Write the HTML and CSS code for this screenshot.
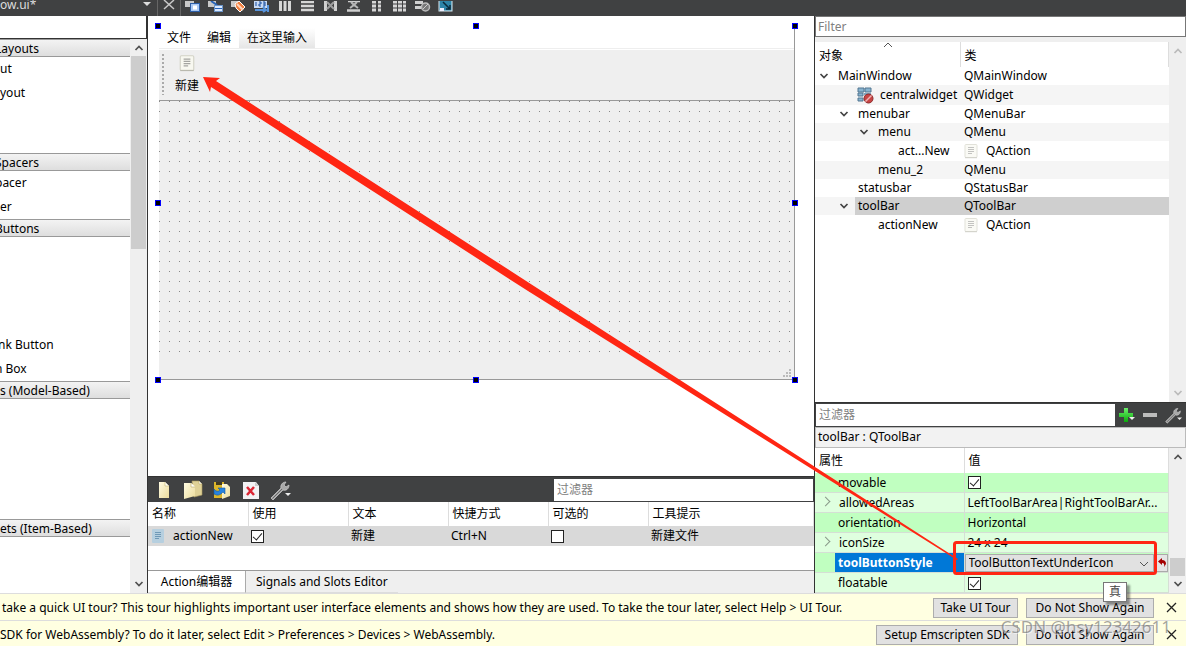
FILE: index.html
```html
<!DOCTYPE html>
<html lang="zh-CN">
<head>
<meta charset="utf-8">
<title>Designer</title>
<link rel="stylesheet" href="styles.css">
</head>
<body>
<svg class="defs" aria-hidden="true">
  <defs>
    <linearGradient id="cream" x1="0" y1="0" x2="1" y2="1"><stop offset="0" stop-color="#fffbe2"/><stop offset="1" stop-color="#ecdc9c"/></linearGradient>
    <linearGradient id="leaf" x1="0" y1="0" x2="0" y2="1"><stop offset="0" stop-color="#6cf06c"/><stop offset="1" stop-color="#0aa80a"/></linearGradient>
    <symbol id="down" viewBox="0 0 10 8"><path d="M1.500 2 5 5.500 8.500 2" fill="none" stroke="currentColor" stroke-width="1.700"/></symbol>
    <symbol id="up" viewBox="0 0 10 8"><path d="M1.500 6 5 2.500 8.500 6" fill="none" stroke="currentColor" stroke-width="1.700"/></symbol>
    <symbol id="note" viewBox="0 0 14 16"><rect x="1" y="1.500" width="12" height="13" rx="1" fill="#f8f8f0" stroke="#d2d2c6"/><path d="M1 14.700h12" stroke="#b9b9ae"/><path d="M4 4.500h6M4 6.500h6M4 8.500h6M4 10.500h4" stroke="#a4a4a0"/></symbol>
    <symbol id="wrench" viewBox="0 0 22 22"><path d="M2 19 12 9c-.8-3 1.500-6 5-6l-2 3 2 2 3-2c0 4-3 6-6 5L4 21z" fill="#a9a9a9" stroke="#d0d0d0" stroke-width=".7"/><path d="M3.500 19.500 13 10" stroke="#666"/><path d="M16 14h6l-3 3z" fill="#eee"/></symbol>
  </defs>
</svg>
<div class="app">
  <header class="topbar">
    <div class="topbar-file"><span>ow.ui*</span><svg width="8" height="5"><path d="M0 0h8L4 4z" fill="#ddd"/></svg></div>
    <button class="tool close" aria-label="Close"><svg width="12" height="16"><path d="M1 0 11 9M11 0 1 9" stroke="#c8c8c8" stroke-width="1.500"/></svg></button>
    <div class="tools">
      <button class="tool" aria-label="Edit widgets"><svg width="16" height="16"><path d="M0 0h9v6H0z" fill="#c9c9c9"/><rect x="5.500" y="2.500" width="9" height="8" fill="#a9c8f4" stroke="#2c5ea8"/><rect x="8" y="4.500" width="4" height="4" fill="#fff"/></svg></button>
      <button class="tool" aria-label="Edit signals"><svg width="16" height="16"><path d="M0 0h8v6H0z" fill="#c9c9c9"/><path d="M3 0 9 4" stroke="#2864b8" stroke-width="2"/><rect x="6.500" y="4.500" width="8" height="6" fill="#d9e8ff" stroke="#6b94c8"/><path d="M7 7.500h7" stroke="#2864b8"/></svg></button>
      <button class="tool" aria-label="Edit buddies"><svg width="16" height="16"><path d="M0 0h8v6H0z" fill="#c9c9c9"/><path d="m4 3 4-3 6 6-5 5-4-4z" fill="#f08040" stroke="#fff"/><path d="m6 3 6 6" stroke="#ffd5bd" stroke-width="2"/></svg></button>
      <button class="tool" aria-label="Edit tab order"><svg width="16" height="16"><path d="M0 0h13v7H0z" fill="#c8daf4"/><path d="M2 1v4M5 1h2v2H5v2h2M9 1h2v4H9M9 3h2" fill="none" stroke="#164d9f"/><path d="M1 9h10M9 6l3 3-3 2M14 4v7" fill="none" stroke="#5794dd" stroke-width="2"/></svg></button>
      <button class="tool" aria-label="Lay out horizontally"><svg width="16" height="16"><path d="M3.500 0v10M8 0v10M12.500 0v10" stroke="#d6d6d6" stroke-width="3"/></svg></button>
      <button class="tool" aria-label="Lay out vertically"><svg width="16" height="16"><path d="M1 1h13M1 5h13M1 9h13" stroke="#d6d6d6" stroke-width="2.500"/></svg></button>
      <button class="tool" aria-label="Horizontal splitter"><svg width="16" height="16"><path d="M2.500 0v10M12.500 0v10" stroke="#d0d0d0" stroke-width="3"/><path d="M4 1l7 7M11 1 4 8" stroke="#9d9d9d" stroke-width="2"/></svg></button>
      <button class="tool" aria-label="Vertical splitter"><svg width="16" height="16"><path d="M2 0h12M1 9.500h13" stroke="#d0d0d0" stroke-width="2.500"/><path d="M5 1l3 3 3-3M4 7l4-3 4 3" fill="none" stroke="#b7b7b7" stroke-width="2"/></svg></button>
      <button class="tool" aria-label="Form layout"><svg width="16" height="16"><path d="M3 1h4M9 1h3M3 5h4M9 5h3M3 9h4M9 9h3" stroke="#d6d6d6" stroke-width="3"/></svg></button>
      <button class="tool" aria-label="Grid layout"><svg width="16" height="16"><path d="M1 1h4M6 1h4M11 1h3M1 5h4M6 5h4M11 5h3M1 9h4M6 9h4M11 9h3" stroke="#d6d6d6" stroke-width="3"/></svg></button>
      <button class="tool" aria-label="Break layout"><svg width="16" height="16"><path d="M0 1.500h8M0 6.500h6" stroke="#d0d0d0" stroke-width="3"/><circle cx="10.500" cy="6" r="4" fill="#777" stroke="#bbb" stroke-width="1.500"/><path d="m8 8 5-5" stroke="#ccc"/></svg></button>
      <button class="tool" aria-label="Adjust size"><svg width="16" height="16"><rect x="1" y="-2" width="13" height="12" fill="#2d83a8" stroke="#dcecf3"/><path d="m5 1 7 7M12 4v4H8" fill="none" stroke="#08283b" stroke-width="1.500"/><path d="M2 7h4v3H2z" fill="#eef"/></svg></button>
    </div>
  </header>

  <main class="workspace">
    <aside class="widgets">
      <input class="widget-filter" type="text" aria-label="Widget filter">
      <div class="scroll-row">
        <div class="widget-list">
          <h2 class="cut">Layouts</h2>
          <ul><li>ut</li><li>yout</li><li></li><li></li></ul>
          <h2 class="cut">Spacers</h2>
          <ul><li class="cut">pacer</li><li>er</li></ul>
          <h2 class="cut">Buttons</h2>
          <ul><li></li><li></li><li></li><li></li><li class="cut">ink Button</li><li class="cut">n Box</li></ul>
          <h2>s (Model-Based)</h2>
          <ul><li></li><li></li><li></li><li></li><li></li></ul>
          <h2>ets (Item-Based)</h2>
        </div>
        <div class="scrollbar"><svg><use href="#up"/></svg><div class="track"><div class="thumb long"></div></div><svg><use href="#down"/></svg></div>
      </div>
    </aside>

    <section class="center">
      <div class="canvas">
        <div class="form">
          <nav class="menubar"><button>文件</button><button>编辑</button><button class="type-here">在这里输入</button></nav>
          <div class="form-toolbar"><span class="grip"></span><button class="new-action"><svg width="16" height="18"><use href="#note"/></svg><span>新建</span></button></div>
          <div class="dots"></div>
          <div class="statusbar"><svg width="9" height="9"><path d="M6 0h2v2H6zM3 3h2v2H3zM6 3h2v2H6zM0 6h2v2H0zM3 6h2v2H3zM6 6h2v2H6z" fill="#bbb"/></svg></div>
          <i class="handle tl"></i><i class="handle tc"></i><i class="handle tr"></i><i class="handle ml"></i><i class="handle mr"></i><i class="handle bl"></i><i class="handle bc"></i><i class="handle br"></i>
        </div>
      </div>
      <div class="actions">
        <div class="actions-bar">
          <button class="tool" aria-label="New"><svg width="20" height="22"><path d="M5 3h6l4 4v12H5z" fill="url(#cream)"/><path d="M11 3v4h4" fill="#fffef5" stroke="#c5b777" stroke-width=".6"/></svg></button>
          <button class="tool" aria-label="Copy"><svg width="20" height="22"><path d="M9 2h7l3 3v11l-8 2z" fill="#dfd197" stroke="#aa9a60" stroke-width=".6"/><path d="M1 4h7l4 3v10L1 20z" fill="url(#cream)"/><path d="M8 4v4h4M16 2v3h3" fill="#fff" stroke="#b8a868" stroke-width=".6"/></svg></button>
          <button class="tool" aria-label="Paste"><svg width="20" height="22"><path d="M2 3h10v16H2z" fill="#dbb52b"/><path d="M4 3h6v3H4z" fill="#413a22"/><path d="M10 5h5l3 3v9l-8 3z" fill="url(#cream)"/><path d="M2 10q3 4 6 1l-2-2h7v6l-2-2q-4 5-9 2z" fill="#2682e0" stroke="#14599e" stroke-width=".6"/></svg></button>
          <button class="tool" aria-label="Delete"><svg width="20" height="22"><path d="M2 3h13l3 4v13H2z" fill="#f2f2f4"/><path d="m6 8 7 8M13 8l-7 8" stroke="#db2634" stroke-width="2.500"/><path d="M14 3v4h4" fill="#ccc"/></svg></button>
          <button class="tool" aria-label="Configure"><svg width="22" height="22"><use href="#wrench"/></svg></button>
          <input class="action-filter" type="text" placeholder="过滤器" aria-label="过滤器">
        </div>
        <table class="action-table">
          <colgroup><col class="c100"><col class="c100"><col class="c100"><col class="c100"><col class="c100"><col></colgroup>
          <thead><tr><th>名称</th><th>使用</th><th>文本</th><th>快捷方式</th><th>可选的</th><th>工具提示</th></tr></thead>
          <tbody><tr><td><span class="with-icon"><svg width="14" height="16"><rect x="1" y="1" width="12" height="14" rx="1" fill="#b6cfdf"/><path d="M4 4.500h6M4 6.500h6M4 8.500h6M4 10.500h4" stroke="#6f99b6"/></svg>actionNew</span></td><td><input type="checkbox" checked aria-label="使用"></td><td>新建</td><td>Ctrl+N</td><td><input type="checkbox" aria-label="可选的"></td><td>新建文件</td></tr></tbody>
        </table>
        <div class="tabs"><button class="active">Action编辑器</button><button>Signals and Slots Editor</button></div>
      </div>
    </section>

    <aside class="inspector">
      <input class="object-filter" type="text" placeholder="Filter" aria-label="Filter">
      <div class="scroll-row objects">
        <div class="tree-wrap">
          <table class="tree">
            <colgroup><col class="c145"><col></colgroup>
            <thead><tr><th>对象<svg class="sort" width="10" height="6"><path d="M1 5 5 1l4 4" fill="none" stroke="#555"/></svg></th><th>类</th></tr></thead>
            <tbody>
              <tr><td><span class="node l0"><svg><use href="#down"/></svg>MainWindow</span></td><td>QMainWindow</td></tr>
              <tr class="tall alt"><td><span class="node central"><svg class="central-icon" viewBox="0 0 17 17"><path d="M1 1h6v4H1zM8 1h6v4H8zM1 6h5v3H1zM1 11h5v3H1z" fill="#87b3cf" stroke="#527791"/><path d="M7 7h7" stroke="#7da6bf" stroke-width="2"/><circle cx="11.500" cy="11.500" r="4.500" fill="#c74444" stroke="#8c2929"/><path d="m8.500 14.500 6-6" stroke="#efb4b4" stroke-width="1.500"/></svg>centralwidget</span></td><td>QWidget</td></tr>
              <tr><td><span class="node l1"><svg><use href="#down"/></svg>menubar</span></td><td>QMenuBar</td></tr>
              <tr class="alt"><td><span class="node l2"><svg><use href="#down"/></svg>menu</span></td><td>QMenu</td></tr>
              <tr class="tall"><td><span class="node l4">act...New</span></td><td><span class="with-icon faint"><svg width="14" height="16"><use href="#note"/></svg>QAction</span></td></tr>
              <tr class="alt"><td><span class="node l3">menu_2</span></td><td>QMenu</td></tr>
              <tr><td><span class="node leaf">statusbar</span></td><td>QStatusBar</td></tr>
              <tr class="alt selected"><td><span class="node l1"><svg><use href="#down"/></svg>toolBar</span></td><td>QToolBar</td></tr>
              <tr class="tall"><td><span class="node l3">actionNew</span></td><td><span class="with-icon faint"><svg width="14" height="16"><use href="#note"/></svg>QAction</span></td></tr>
            </tbody>
          </table>
        </div>
        <div class="scrollbar disabled"><svg><use href="#up"/></svg><div class="track"></div><svg><use href="#down"/></svg></div>
      </div>
      <div class="props">
        <div class="props-bar">
          <input type="text" placeholder="过滤器" aria-label="过滤器">
          <button class="tool" aria-label="Add"><svg width="18" height="18"><path d="M6 2h4v5h5v4h-5v5H6v-5H1V7h5z" fill="url(#leaf)"/><path d="M11 11h6l-3 3z" fill="#eee"/></svg></button>
          <button class="tool" aria-label="Remove"><svg width="18" height="18"><path d="M2 7h14v4H2z" fill="#bcbcbc"/></svg></button>
          <button class="tool" aria-label="Configure"><svg width="18" height="18"><use href="#wrench"/></svg></button>
        </div>
        <div class="object-label">toolBar : QToolBar</div>
        <div class="scroll-row">
          <table class="property-table">
            <colgroup><col class="c149"><col></colgroup>
            <thead><tr><th>属性</th><th>值</th></tr></thead>
            <tbody>
              <tr><td>movable</td><td><input type="checkbox" checked aria-label="movable"></td></tr>
              <tr><td class="expand">allowedAreas</td><td>LeftToolBarArea|RightToolBarAr...</td></tr>
              <tr><td>orientation</td><td>Horizontal</td></tr>
              <tr><td class="expand">iconSize</td><td>24 x 24</td></tr>
              <tr class="current"><td><label for="style">toolButtonStyle</label></td><td><div class="editor"><div class="combo"><select id="style"><option>ToolButtonTextUnderIcon</option></select><svg width="10" height="8"><path d="m1 2 4 4 4-4" fill="none" stroke="#555"/></svg></div><button aria-label="Reset"><svg width="8" height="10"><path d="M4 0v2q4 0 4 4l-2 3q1-4-2-4v2L0 3.500z" fill="#a40000"/></svg></button></div></td></tr>
              <tr><td>floatable</td><td><input type="checkbox" checked aria-label="floatable"></td></tr>
            </tbody>
          </table>
          <div class="scrollbar"><svg><use href="#up"/></svg><div class="track end"><div class="thumb short"></div></div><svg><use href="#down"/></svg></div>
        </div>
      </div>
    </aside>
  </main>

  <footer>
    <div class="info"><p class="first">take a quick UI tour? This tour highlights important user interface elements and shows how they are used. To take the tour later, select Help &gt; UI Tour.</p><button class="push short-push">Take UI Tour</button><button class="push">Do Not Show Again</button><button class="dismiss" aria-label="Close"><svg width="11" height="11"><path d="m1 1 9 9M10 1l-9 9" stroke="#222" stroke-width="1.300"/></svg></button></div>
    <div class="info last"><p>SDK for WebAssembly? To do it later, select Edit &gt; Preferences &gt; Devices &gt; WebAssembly.</p><button class="push wide-push">Setup Emscripten SDK</button><button class="push">Do Not Show Again</button><button class="dismiss" aria-label="Close"><svg width="11" height="11"><path d="m1 1 9 9M10 1l-9 9" stroke="#222" stroke-width="1.300"/></svg></button></div>
  </footer>

  <svg class="annotation" width="1186" height="646" viewBox="0 0 1186 646" aria-hidden="true"><path d="M203 77 220 78 216 81 530 283.500 958 559 957 560 528 291 211 87 210 92z" fill="#ff2613"/><rect x="954.500" y="542.500" width="201" height="31" rx="2" fill="none" stroke="#ff2613" stroke-width="3"/></svg>
  <div class="tooltip">真</div>
  <div class="watermark">CSDN @hsy12342611</div>
</div>
</body>
</html>
```
FILE: styles.css
```css
* { box-sizing: border-box; }
body { margin: 0; font-family: "Noto Sans", "Noto Sans CJK SC", sans-serif; font-size: 12px; line-height: 18px; color: #000; }
button, input, select { font: inherit; color: inherit; margin: 0; }
button { padding: 0; border: 0; background: none; }
svg { display: block; flex: none; }
p, h2, ul { margin: 0; padding: 0; }
table { border-collapse: collapse; table-layout: fixed; width: 100%; }
th, td { padding: 0; text-align: left; font-weight: 400; white-space: nowrap; }
input::placeholder { color: #808080; opacity: 1; }
input[type="checkbox"] { appearance: none; display: block; width: 13px; height: 13px; border: 1px solid #222; background: #fff; }
input[type="checkbox"]:checked::after { content: ""; display: block; width: 4px; height: 8px; margin: 0 auto; border: solid #222; border-width: 0 1px 1px 0; transform: rotate(40deg); }
.defs { position: absolute; width: 0; height: 0; }
.app { position: relative; display: flex; flex-direction: column; height: 100vh; overflow: hidden; background: #fff; }
.tool { display: flex; align-items: center; justify-content: center; }

.topbar { display: flex; flex: none; height: 16px; background: #404142; color: #ddd; overflow: hidden; }
.topbar-file { display: flex; justify-content: space-between; align-items: flex-start; width: 158px; padding-right: 6px; border-right: 1px solid #666; }
.topbar-file span { margin-top: -4px; }
.topbar-file svg { margin-top: 2px; }
.close { width: 23px; border-right: 1px solid #666; }
.tools { display: flex; gap: 7px; padding: 1px 0 0 4px; }

.workspace { display: flex; flex: 1; min-height: 0; }
.scroll-row { display: flex; flex: 1; min-height: 0; }
.scrollbar { display: flex; flex-direction: column; flex: none; align-items: center; width: 17px; padding: 5px 0; gap: 4px; background: #efefef; color: #505050; }
.scrollbar > svg { width: 10px; height: 8px; }
.scrollbar.disabled { color: #bbb; }
.track { flex: 1; align-self: stretch; display: flex; flex-direction: column; }
.track.end { justify-content: flex-end; }
.thumb { margin: 0 1px; background: #cdcdcd; }
.long { height: 193px; }
.short { height: 18px; }

.widgets { display: flex; flex-direction: column; flex: none; width: 148px; border-right: 1px solid #333; }
.widget-filter { flex: none; width: 100%; height: 23px; border: solid #333; border-width: 0 1px 1px 0; }
.widget-list { flex: 1; overflow: hidden; }
.widget-list h2 { height: 18px; border: solid #999; border-width: 1px 0; background: linear-gradient(#f3f3f3, #dedede); font-size: 12px; font-weight: 400; line-height: 17px; white-space: nowrap; }
.widget-list ul { list-style: none; }
.widget-list li { height: 24px; line-height: 24px; white-space: nowrap; }
.widget-list .cut { text-indent: -5px; }

.center { display: flex; flex-direction: column; flex: 1; min-width: 0; }
.canvas { flex: 1; padding: 10px 19px 0 11px; }
.form { position: relative; border: solid #999; border-width: 0 1px 1px 0; background: #efefef; }
.menubar { display: flex; height: 23px; background: #fff; border-bottom: 1px solid #eee; }
.menubar button { width: 40px; padding-top: 2px; }
.menubar .type-here { width: 76px; height: 20px; margin-top: 2px; padding: 0; background: linear-gradient(#fff, #e6e6e6); }
.form-toolbar { display: flex; height: 52px; padding: 4px 0 5px 3px; border-top: 1px solid #fff; border-bottom: 1px solid #999; }
.grip { width: 2px; background: repeating-linear-gradient(#aaa 0 2px, #efefef 2px 4px); }
.new-action { display: flex; flex-direction: column; align-items: center; justify-content: space-between; width: 46px; }
.dots { height: 252px; background-image: radial-gradient(circle at 0 0, #888 0 1px, transparent 1px); background-size: 10px 10px; }
.statusbar { display: flex; justify-content: flex-end; align-items: flex-end; height: 26px; padding: 0 2px 1px; }
.handle { position: absolute; width: 6px; height: 6px; border: 1px solid #00f; background: #000; }
.tl, .tc, .tr { top: -3px; }
.ml, .mr { top: calc(50% - 3px); }
.bl, .bc, .br { bottom: -4px; }
.tl, .ml, .bl { left: -4px; }
.tc, .bc { left: calc(50% - 4px); }
.tr, .mr, .br { right: -4px; }

.actions { flex: none; border-top: 1px solid #333; }
.actions-bar { display: flex; align-items: center; height: 25px; padding: 0 1px; background: #404142; }
.actions-bar .tool { width: 29px; }
.action-filter { width: 39%; height: 22px; margin-left: auto; padding: 0 3px; border: 0; background: #fff; }
.c100 { width: 100px; }
.c145 { width: 145px; }
.c149 { width: 149px; }
.action-table th { height: 24px; padding-left: 4px; border-right: 1px solid #ddd; }
.action-table td { height: 20px; padding-left: 3px; background: #d9d9d9; }
.with-icon { display: flex; align-items: center; gap: 8px; }
.faint svg { opacity: .65; }
.tabs { display: flex; height: 23px; margin-top: 24px; background: #efefef; border-top: 1px solid #999; }
.tabs button { padding: 0 10px; border-bottom: 1px solid #ddd; }
.tabs .active { width: 98px; padding: 0; background: #fff; border-right: 1px solid #aaa; }

.inspector { display: flex; flex-direction: column; flex: none; width: 372px; border-left: 1px solid #333; background: #efefef; }
.object-filter { flex: none; width: 100%; height: 21px; margin-bottom: 5px; padding: 0 2px; border: 1px solid #777; background: #fff; }
.tree-wrap { flex: 1; background: #fff; }
.tree th { position: relative; height: 25px; padding: 3px 0 0 4px; border-right: 1px solid #ddd; }
.tree .sort { position: absolute; top: 0; left: 68px; }
.tree td { height: 18px; padding-left: 4px; }
.tree td:first-child { padding-left: 0; }
.tree .tall td { height: 20px; }
.alt { background: #f5f5f5; }
.tree .selected td { background: #cfcfcf; }
.tree .selected td:first-child { background: linear-gradient(90deg, #f5f5f5 0 40px, #cfcfcf 40px); }
.node { display: flex; align-items: center; gap: 9px; }
.node svg { width: 10px; height: 8px; color: #444; }
.node .central-icon { width: 17px; height: 17px; }
.l0 { padding-left: 4px; }
.l1 { padding-left: 24px; }
.l2 { padding-left: 44px; }
.leaf { padding-left: 43px; }
.l3 { padding-left: 63px; }
.l4 { padding-left: 83px; }
.central { gap: 6px; padding-left: 42px; }

.props { flex: none; border-top: 1px solid #333; }
.props-bar { display: flex; height: 24px; padding: 1px 2px 1px 1px; background: #404142; }
.props-bar input { flex: 1; min-width: 0; border: 0; padding: 0 3px; background: #fff; }
.props-bar .tool { width: 23px; }
.object-label { height: 21px; padding-left: 2px; border: 1px solid #bbb; background: #f2f2f2; }
.property-table { flex: 1; width: 0; }
.property-table th { height: 25px; padding: 1px 0 0 4px; background: #fff; border-right: 1px solid #ddd; }
.property-table td { height: 20px; border: solid #d5dfd5; border-width: 0 1px 1px 0; padding: 1px 0 0 3px; }
.property-table td:first-child { padding-left: 23px; }
.property-table tbody tr:nth-child(odd) { background: #c0ffc0; }
.property-table tbody tr:nth-child(even) { background: #dfffdf; }
.property-table .expand::before { content: ""; display: inline-block; width: 6px; height: 6px; margin: 0 10px 2px -16px; border: solid #8a9a8a; border-width: 1px 1px 0 0; transform: rotate(45deg); }
.property-table .current td:first-child { background: linear-gradient(90deg, #c0ffc0 0 20px, #0078d7 20px); color: #fff; }
.property-table .current label { font-weight: 700; }
.property-table .current td:last-child { padding: 0; }
.editor { display: flex; gap: 2px; height: 18px; }
.combo { position: relative; flex: 1; }
.combo select { appearance: none; display: block; width: 100%; height: 18px; padding: 0 3px; border: 1px solid #aaa; border-radius: 0; background: #e1e1e1; line-height: 16px; }
.combo svg { position: absolute; right: 5px; top: 6px; }
.editor button { display: grid; place-items: center; width: 12px; border: 1px solid #aaa; background: #e5e5e5; }

footer { flex: none; }
.info { display: flex; align-items: center; gap: 8px; height: 27px; padding: 1px 7px 0 0; border-top: 1px solid #ddd; background: #ffffe1; }
.info.last { height: 26px; padding-top: 2px; }
.info p { flex: 1; min-width: 0; white-space: nowrap; }
.info .first { padding-left: 2px; }
.push { flex: none; width: 128px; height: 20px; border: 1px solid #adadad; background: #e1e1e1; white-space: nowrap; }
.short-push { width: 85px; }
.wide-push { width: 142px; }
.dismiss { display: grid; place-items: center; width: 15px; margin-left: 2px; }
.annotation { position: absolute; left: 0; top: 0; pointer-events: none; }
.tooltip { position: absolute; right: 59px; bottom: 44px; width: 24px; height: 20px; border: 1px solid #777; background: #fff; box-shadow: 3px 3px 2px #0006; color: #444; text-align: center; }
.watermark { position: absolute; right: 15px; bottom: 8px; font-size: 17px; line-height: 22px; color: #777a; text-shadow: 1px 1px 0 #fff8; white-space: nowrap; pointer-events: none; }
```
